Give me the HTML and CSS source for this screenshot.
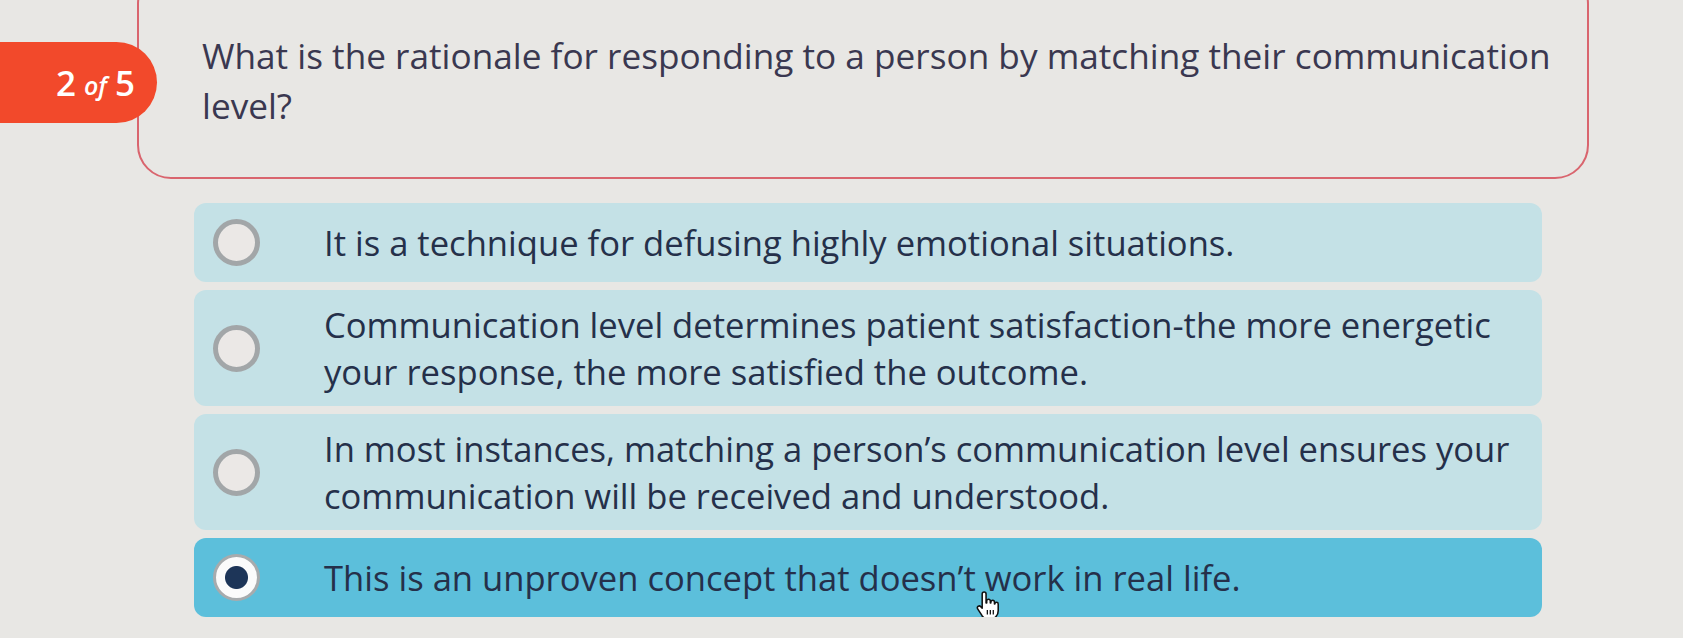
FILE: index.html
```html
<!DOCTYPE HTML>
<html>
<head>
<meta charset="utf-8">
<link rel="stylesheet" href="styles.css">
</head>
<body>
	<div class="quiz">
		<div class="question-head">
			<div class="counter"><span class="num">2</span><span class="of">of</span><span class="num">5</span></div>
			<div class="question">
				What is the rationale for responding to a person by matching their communication level?
			</div>
		</div>

		<ul class="answers">
			<li class="answer">
				<span class="radio"></span>
				<span class="label">It is a technique for defusing highly emotional situations.</span>
			</li>
			<li class="answer">
				<span class="radio"></span>
				<span class="label">Communication level determines patient satisfaction-the more energetic your response, the more satisfied the outcome.</span>
			</li>
			<li class="answer">
				<span class="radio"></span>
				<span class="label">In most instances, matching a person’s communication level ensures your communication will be received and understood.</span>
			</li>
			<li class="answer selected">
				<span class="radio"></span>
				<span class="label">This is an unproven concept that doesn’t work in real life.</span>
				<!-- mouse pointer hovering the chosen answer -->
				<svg class="pointer" viewBox="0 0 20 24" width="26" height="31">
					<path d="M7 1.5c.9 0 1.5.7 1.5 1.5v7h.5V8.5c0-.8.6-1.4 1.4-1.4s1.4.6 1.4 1.4V10h.4V9.4c0-.8.6-1.4 1.4-1.4s1.4.6 1.4 1.4v1.4h.3c0-.8.6-1.3 1.3-1.3s1.3.6 1.3 1.3V16c0 3.5-2.5 6.5-6 6.5H10c-2 0-3.5-1-4.6-2.6L2 14.6c-.5-.7-.3-1.6.4-2 .7-.5 1.5-.3 2 .3L5.5 14V3c0-.8.6-1.5 1.5-1.5z" fill="#fff" stroke="#111" stroke-width="1.2" stroke-linejoin="round"/>
					<path d="M9.5 15.5v3.5M11.8 15.5v3.5M14.1 15.5v3.5" stroke="#111" stroke-width="1"/>
				</svg>
			</li>
		</ul>
	</div>
</body>
</html>
```

FILE: styles.css
```css
html, body {
	margin: 0;
	padding: 0;
}

body {
	background: #e8e7e4;
	font-family: "Open Sans", "Noto Sans", sans-serif;
}

.quiz {
	width: 1683px;
}

/* keeps the card's negative top margin inside, so the badge lines up */
.question-head {
	position: relative;
	display: flow-root;
}

.question {
	margin: -30px 94px 0 137px;
	padding: 58px 15px 47px 63px;
	border: 2px solid #d9656e;
	border-radius: 34px;
	font-size: 35.2px;
	line-height: 50px;
	color: #3a3850;
}

.counter {
	position: absolute;
	left: 0;
	top: 42px;
	z-index: 1;
	width: 157px;
	height: 81px;
	box-sizing: border-box;
	padding-left: 56px;
	display: flex;
	align-items: center;
	gap: 8px;
	background: #f2492b;
	border-radius: 0 41px 41px 0;
	color: #fff;
}

.counter .num {
	font-size: 35px;
	font-weight: 600;
}

.counter .of {
	font-size: 25px;
	font-style: italic;
	font-weight: 600;
	margin-top: 4px;
}

.answers {
	list-style: none;
	margin: 24px 0 0 194px;
	padding: 0;
	width: 1348px;
	display: flex;
	flex-direction: column;
	gap: 8px;
}

.answer {
	position: relative;
	display: flex;
	align-items: center;
	min-height: 79px;
	box-sizing: border-box;
	padding: 11px 6px 11px 19px;
	background: #c4e1e6;
	border-radius: 12px;
	color: #25304a;
	font-size: 34.6px;
	line-height: 47px;
}

.answer .radio {
	flex: none;
	width: 47px;
	height: 47px;
	box-sizing: border-box;
	border: 5px solid #a2a6a8;
	border-radius: 50%;
	background: #ebe8e6;
	margin-right: 64px;
}

.answer.selected {
	background: #5cbfdb;
}

.answer.selected .radio {
	border: 3px solid #a7abad;
	background: radial-gradient(circle, #1d3558 0 11px, #fbfbfb 12px);
}

.pointer {
	position: absolute;
	left: 781px;
	top: 52px;
}
```
